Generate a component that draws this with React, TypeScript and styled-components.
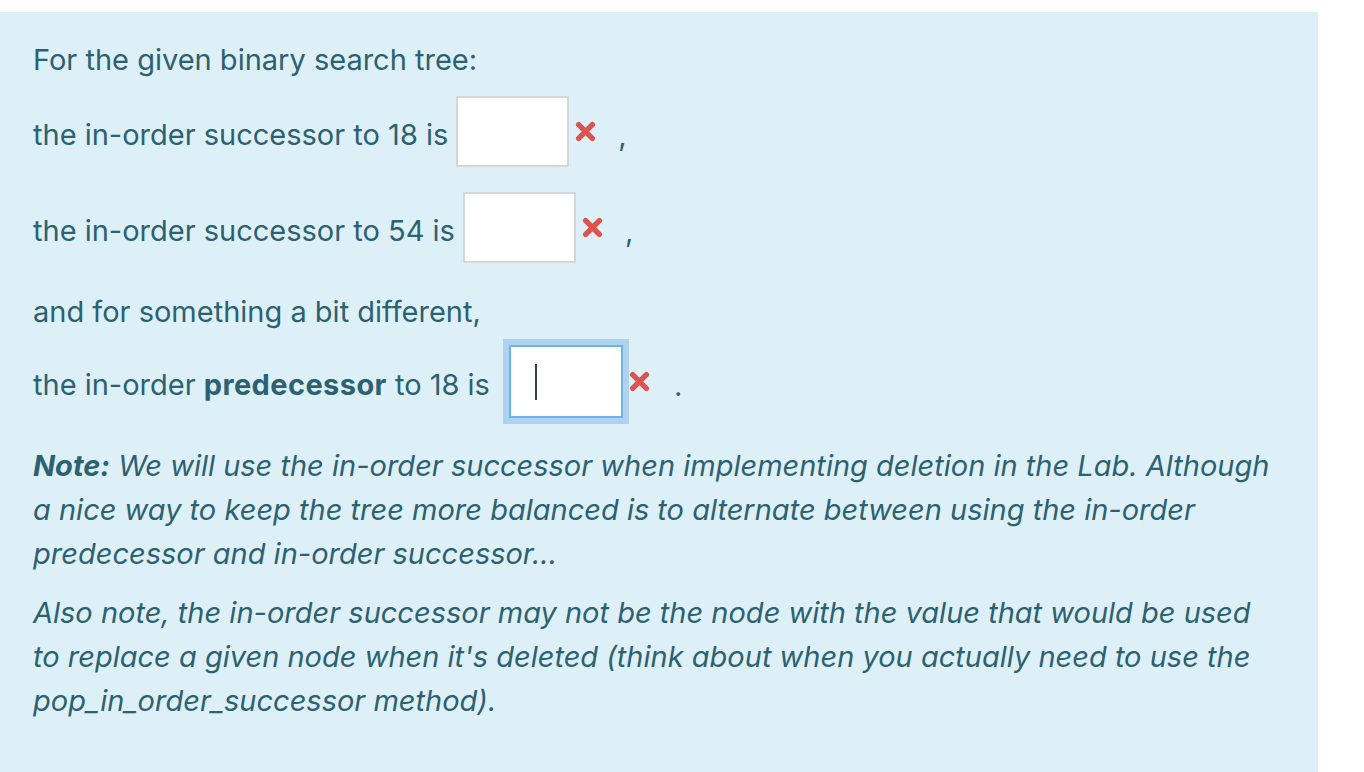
import React from "react";
import styled, { createGlobalStyle } from "styled-components";

const Global = createGlobalStyle`
  html, body { margin: 0; padding: 0; background: #ffffff; }
  body { font-family: Inter, "Noto Sans", "Liberation Sans", sans-serif; }
`;

const Page = styled.div`
  padding-top: 12px;
  width: 1318px;
`;

const Panel = styled.div`
  background: #def0f7;
  color: #2c6172;
  font-size: 29px;
  line-height: 44px;
  padding: 26px 38px 40px 33px;
  min-height: 760px;
  box-sizing: border-box;
`;

const Row = styled.div<{ $mt?: number }>`
  display: flex;
  align-items: center;
  margin-top: ${(p) => p.$mt ?? 0}px;
  white-space: nowrap;
`;

const Label = styled.span`
  margin-right: 8px;
  padding-top: 7px;
`;

const Field = styled.div<{ $focus?: boolean }>`
  width: ${(p) => (p.$focus ? 114 : 113)}px;
  height: ${(p) => (p.$focus ? 73 : 71)}px;
  box-sizing: border-box;
  background: #ffffff;
  border: 2px solid ${(p) => (p.$focus ? "#6db3ee" : "#d3d8dc")};
  box-shadow: ${(p) => (p.$focus ? "0 0 0 6px #afd3ee" : "none")};
  margin-left: ${(p) => (p.$focus ? 11 : 0)}px;
  position: relative;
`;

const Caret = styled.span`
  position: absolute;
  left: 24px;
  top: 17px;
  width: 2px;
  height: 36px;
  background: #3a3f46;
`;

const Mark = styled.svg`
  width: 21px;
  height: 21px;
  margin-left: 6px;
  flex: none;
`;

const Punct = styled.span<{ $gap: number }>`
  margin-left: ${(p) => p.$gap}px;
  padding-top: 8px;
`;

const NoteBlock = styled.p<{ $mt: number }>`
  margin: ${(p) => p.$mt}px 0 0;
  font-style: italic;
`;

const Strong = styled.strong`
  font-weight: 700;
  font-style: normal;
  letter-spacing: 0.4px;
`;

const StrongItalic = styled.strong`
  font-weight: 700;
`;

function Cross() {
  return (
    <Mark viewBox="0 0 20 20">
      <path d="M3.5 3.5 L16.5 16.5 M16.5 3.5 L3.5 16.5" stroke="#dc5350" strokeWidth="5.2" strokeLinecap="round" />
    </Mark>
  );
}

export default function App() {
  return (
    <>
      <Global />
      <Page>
        <Panel>
          <Row>For the given binary search tree:</Row>
          <Row $mt={14}>
            <Label>the in-order successor to 18 is</Label>
            <Field />
            <Cross />
            <Punct $gap={22}>,</Punct>
          </Row>
          <Row $mt={25}>
            <Label>the in-order successor to 54 is</Label>
            <Field />
            <Cross />
            <Punct $gap={22}>,</Punct>
          </Row>
          <Row $mt={27}>and for something a bit different,</Row>
          <Row $mt={11}>
            <Label>
              the in-order <Strong>predecessor</Strong> to 18 is
            </Label>
            <Field $focus>
              <Caret />
            </Field>
            <Cross />
            <Punct $gap={24}>.</Punct>
          </Row>
          <NoteBlock $mt={26}>
            <StrongItalic>Note:</StrongItalic> We will use the in-order successor when implementing deletion in the Lab. Although a nice way to keep the tree more balanced is to alternate between using the in-order predecessor and in-order successor...
          </NoteBlock>
          <NoteBlock $mt={15}>
            Also note, the in-order successor may not be the node with the value that would be used to replace a given node when it's deleted (think about when you actually need to use the pop_in_order_successor method).
          </NoteBlock>
        </Panel>
      </Page>
    </>
  );
}
